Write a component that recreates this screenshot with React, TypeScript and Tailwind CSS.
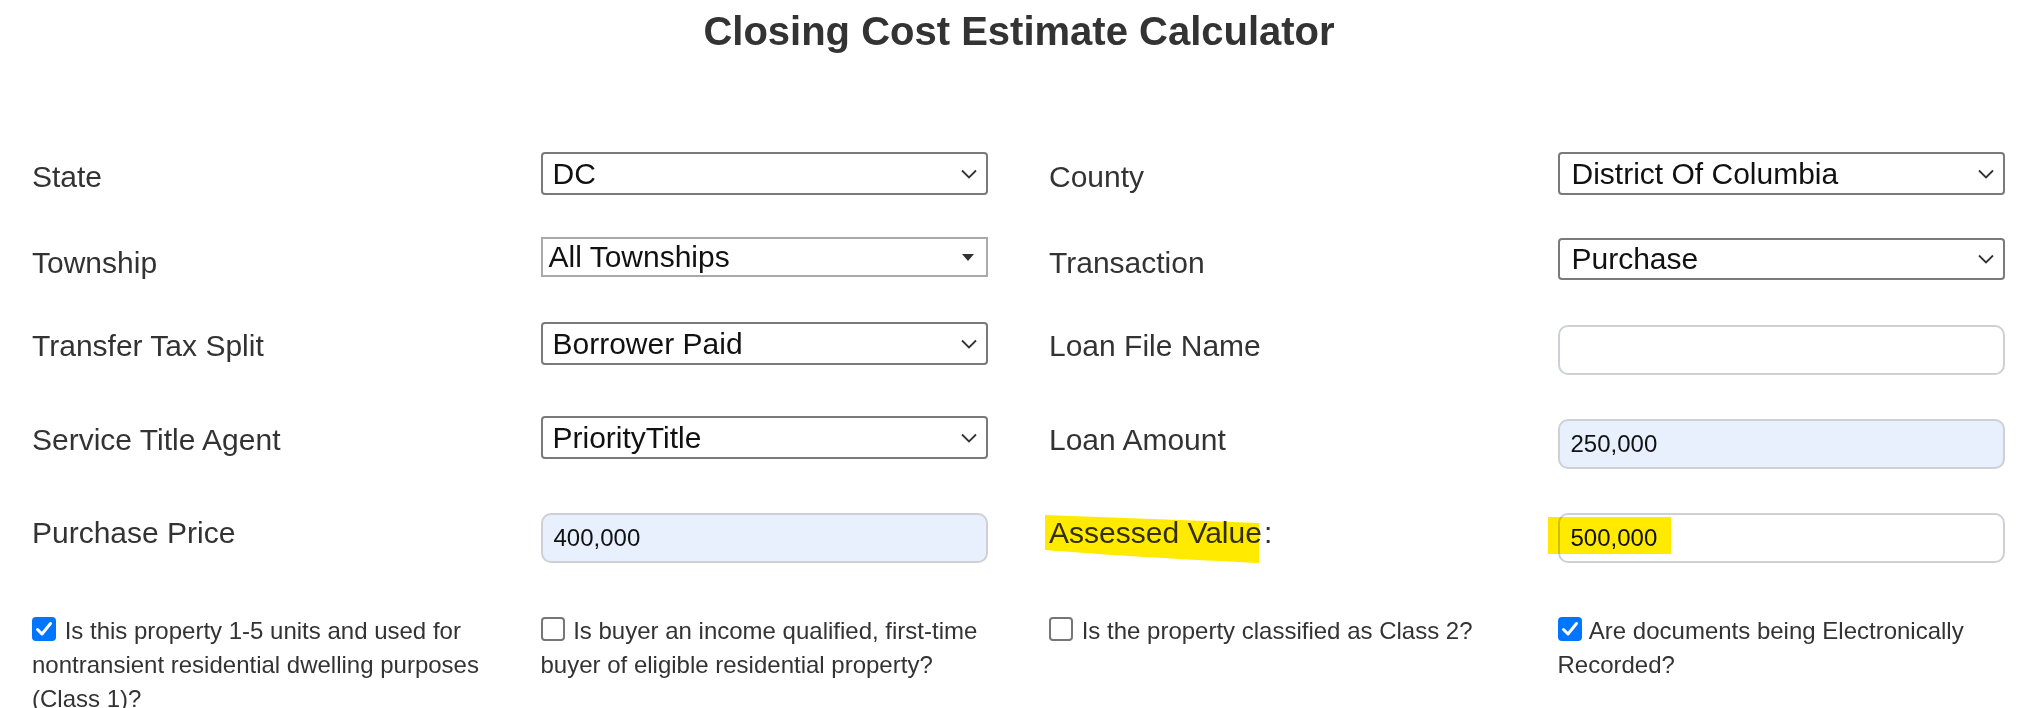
import type { ReactNode } from "react";

const FONT = "font-['Liberation_Sans',Arial,sans-serif]";

const Label = ({ children, h }: { children: ReactNode; h: string }) => (
  <div className={`relative flex items-center text-[30px] text-[#333] ${h}`}>
    {children}
  </div>
);

const Chevron = () => (
  <svg width="16" height="10" viewBox="0 0 16 10" className="shrink-0">
    <path d="M1 1.5 L8 8.5 L15 1.5" fill="none" stroke="#333" strokeWidth="1.8" />
  </svg>
);

const Select = ({ value, className = "" }: { value: string; className?: string }) => (
  <div
    className={`flex w-[447px] items-center justify-between rounded-[4px] border-2 border-[#7a7a7a] bg-white pl-[10px] pr-[9px] text-[30px] text-[#111] ${className}`}
  >
    <span className="leading-none">{value}</span>
    <Chevron />
  </div>
);

const TextInput = ({ value, filled, className = "" }: { value: string; filled?: boolean; className?: string }) => (
  <input
    readOnly
    value={value}
    className={`block h-[50px] w-[447px] rounded-[10px] border-2 border-[#cdd1d6] pl-[11px] text-[24px] text-[#111] outline-none ${FONT} ${
      filled ? "bg-[#e8f0fe]" : "bg-white"
    } ${className}`}
  />
);

const Check = ({ checked }: { checked?: boolean }) =>
  checked ? (
    <span className="mr-[2px] inline-block h-[24px] w-[24px] rounded-[4px] bg-[#0075ff] align-[-2px]">
      <svg width="24" height="24" viewBox="0 0 24 24">
        <path d="M5.5 12.5 L10 17 L18.5 6.5" fill="none" stroke="#fff" strokeWidth="3" strokeLinecap="round" strokeLinejoin="round" />
      </svg>
    </span>
  ) : (
    <span className="mr-[2px] inline-block h-[24px] w-[24px] rounded-[4px] border-2 border-[#767676] bg-white align-[-2px]" />
  );

const CheckItem = ({ checked, children }: { checked?: boolean; children: ReactNode }) => (
  <div className="text-[24px] leading-[34px] text-[#333]">
    <Check checked={checked} /> {children}
  </div>
);

export default function App() {
  return (
    <div className={`h-[708px] w-full overflow-hidden bg-white ${FONT} text-[#333]`}>
      <h1 className="pt-[8px] text-center text-[40px] font-bold leading-[46px] text-[#333]">
        Closing Cost Estimate Calculator
      </h1>

      <div className="pl-[32px]">
        {/* row 1 */}
        <div className="mt-[98px] grid h-[43px] grid-cols-[repeat(4,478.5px)] items-start gap-x-[30px]">
          <Label h="h-[48px]">State</Label>
          <Select value="DC" className="h-[43px]" />
          <Label h="h-[48px]">County</Label>
          <Select value="District Of Columbia" className="h-[43px] pl-[12px]" />
        </div>

        {/* row 2 */}
        <div className="mt-[42px] grid h-[43px] grid-cols-[repeat(4,478.5px)] items-start gap-x-[30px]">
          <Label h="h-[51px]">Township</Label>
          <div className="flex h-[40px] w-[447px] items-center justify-between border-2 border-[#a9a9a9] bg-white pl-[6px] pr-[12px] text-[30px] text-[#111]">
            <span className="leading-none">All Townships</span>
            <svg width="12" height="7" viewBox="0 0 12 7">
              <path d="M0 0 L12 0 L6 7 Z" fill="#333" />
            </svg>
          </div>
          <Label h="h-[51px]">Transaction</Label>
          <Select value="Purchase" className="mt-[1px] h-[42px] pl-[12px]" />
        </div>

        {/* row 3 */}
        <div className="mt-[42px] grid h-[52px] grid-cols-[repeat(4,478.5px)] items-start gap-x-[30px]">
          <Label h="h-[46px]">Transfer Tax Split</Label>
          <Select value="Borrower Paid" className="h-[43px]" />
          <Label h="h-[46px]">Loan File Name</Label>
          <TextInput value="" className="mt-[3px] h-[49px]" />
        </div>

        {/* row 4 */}
        <div className="mt-[42px] grid h-[52px] grid-cols-[repeat(4,478.5px)] items-start gap-x-[30px]">
          <Label h="h-[46px]">Service Title Agent</Label>
          <Select value="PriorityTitle" className="h-[43px]" />
          <Label h="h-[46px]">Loan Amount</Label>
          <TextInput value="250,000" filled className="mt-[3px] h-[49px]" />
        </div>

        {/* row 5 */}
        <div className="mt-[45px] grid h-[50px] grid-cols-[repeat(4,478.5px)] items-start gap-x-[30px]">
          <Label h="h-[39px]">Purchase Price</Label>
          <TextInput value="400,000" filled />
          <Label h="h-[39px]">
            <span>Assessed Value</span>
            <span className="ml-[2px]">:</span>
            {/* highlighter mark */}
            <svg
              width="216"
              height="52"
              viewBox="0 0 216 52"
              className="pointer-events-none absolute left-[-4px] top-0 mix-blend-multiply"
            >
              <path d="M0 2 L214 10 L214 50 C150 47 60 42 0 37 Z" fill="#ffea00" />
            </svg>
          </Label>
          <div className="relative">
            <TextInput value="500,000" />
            <div className="pointer-events-none absolute left-[-10px] top-[4px] h-[37px] w-[123px] bg-[#ffea00] mix-blend-multiply" />
          </div>
        </div>

        {/* checkboxes */}
        <div className="mt-[51px] grid grid-cols-[repeat(4,478.5px)] items-start gap-x-[30px]">
          <CheckItem checked>
            Is this property 1-5 units and used for nontransient residential dwelling purposes (Class 1)?
          </CheckItem>
          <CheckItem>Is buyer an income qualified, first-time buyer of eligible residential property?</CheckItem>
          <CheckItem>Is the property classified as Class 2?</CheckItem>
          <CheckItem checked>Are documents being Electronically Recorded?</CheckItem>
        </div>
      </div>
    </div>
  );
}
